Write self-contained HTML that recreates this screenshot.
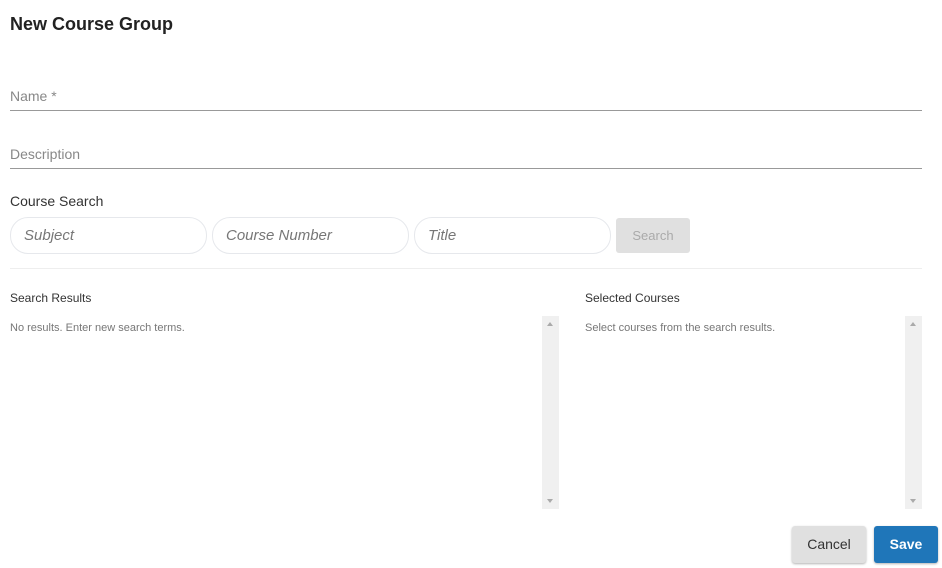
<!DOCTYPE html>
<html><head><style>
body{margin:0;width:942px;height:568px;background:#fff;font-family:"Liberation Sans",sans-serif;position:relative;overflow:hidden;color:#333}
.a{position:absolute}
.h{left:10px;top:14px;font-size:18px;font-weight:bold;color:#222}
.lbl{font-size:14px;color:#888}
.line{height:1px;background:#999;left:10px;width:912px}
.pill{top:217px;height:37px;width:197px;border:1px solid #e6e8ec;border-radius:18px;font-style:italic;font-size:15px;color:#777;line-height:36px;box-sizing:border-box;padding-left:13px}
.sb{width:17px;background:#f0f0f0;top:316px;height:193px}
.sb:before{content:"";position:absolute;left:5px;top:6px;border:3.5px solid transparent;border-bottom:4px solid #aaa;border-top:0}
.sb:after{content:"";position:absolute;left:5px;bottom:6px;border:3.5px solid transparent;border-top:4px solid #aaa;border-bottom:0}
.sm{font-size:11px;color:#777}
</style></head><body>
<div class="a h">New Course Group</div>
<div class="a lbl" style="left:10px;top:88px">Name *</div>
<div class="a line" style="top:110px"></div>
<div class="a lbl" style="left:10px;top:146px">Description</div>
<div class="a line" style="top:168px"></div>
<div class="a" style="left:10px;top:193px;font-size:14px;color:#333">Course Search</div>
<div class="a pill" style="left:10px">Subject</div>
<div class="a pill" style="left:212px">Course Number</div>
<div class="a pill" style="left:414px">Title</div>
<div class="a" style="left:616px;top:218px;width:74px;height:35px;background:#e0e0e0;border-radius:3px;color:#aaa;font-size:13px;text-align:center;line-height:36px">Search</div>
<div class="a" style="left:10px;top:268px;width:912px;height:1px;background:#eee"></div>
<div class="a" style="left:10px;top:291px;font-size:12px;color:#333">Search Results</div>
<div class="a" style="left:585px;top:291px;font-size:12px;color:#333">Selected Courses</div>
<div class="a sm" style="left:10px;top:322px">No results. Enter new search terms.</div>
<div class="a sm" style="left:585px;top:322px">Select courses from the search results.</div>
<div class="a sb" style="left:542px"></div>
<div class="a sb" style="left:905px"></div>
<div class="a" style="left:792px;top:526px;width:74px;height:37px;background:#e0e0e0;border-radius:3px;box-shadow:0 1px 2px rgba(0,0,0,.3);font-size:14px;text-align:center;line-height:37px;color:#333">Cancel</div>
<div class="a" style="left:874px;top:526px;width:64px;height:37px;background:#1f76b9;border-radius:3px;box-shadow:0 1px 2px rgba(0,0,0,.3);font-size:14px;font-weight:bold;text-align:center;line-height:37px;color:#fff">Save</div>
</body></html>
